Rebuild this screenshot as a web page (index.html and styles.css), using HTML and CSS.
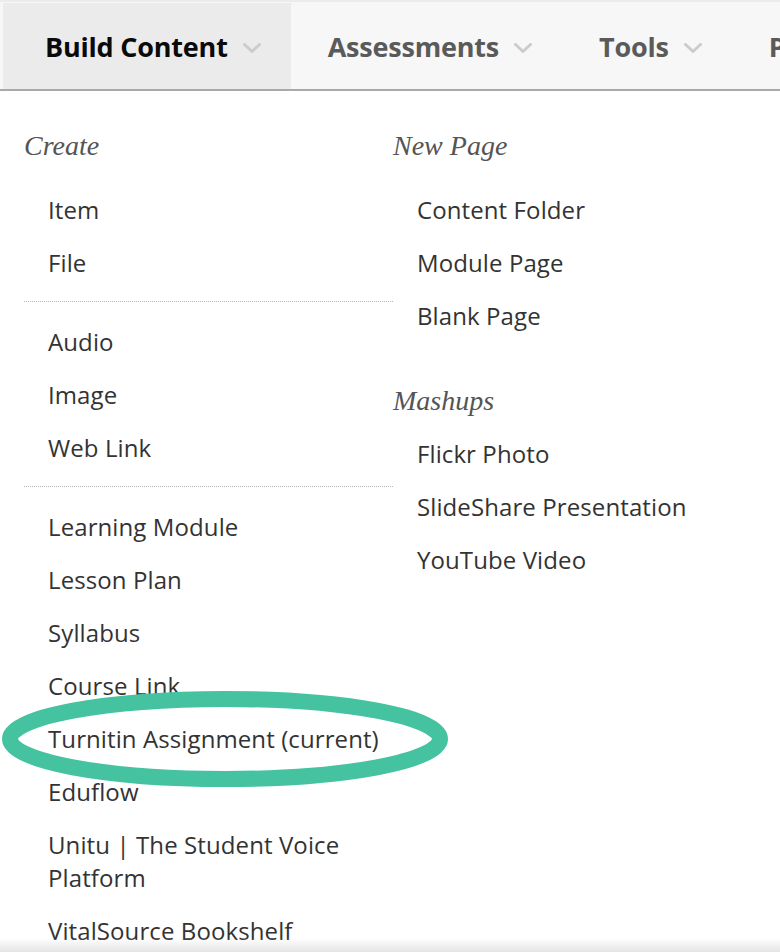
FILE: index.html
```html
<!DOCTYPE html>
<html lang="en">
<head>
<meta charset="utf-8">
<title>Build Content</title>
<link rel="stylesheet" href="styles.css">
</head>
<body>
<nav class="tabs">
  <div class="tab tab-active">Build Content<svg class="chev" viewBox="0 0 18 10" width="18" height="10"><polyline points="1.5,1.5 9,8.5 16.5,1.5"/></svg></div>
  <div class="tab">Assessments<svg class="chev" viewBox="0 0 18 10" width="18" height="10"><polyline points="1.5,1.5 9,8.5 16.5,1.5"/></svg></div>
  <div class="tab">Tools<svg class="chev" viewBox="0 0 18 10" width="18" height="10"><polyline points="1.5,1.5 9,8.5 16.5,1.5"/></svg></div>
  <div class="tab">Partner Content<svg class="chev" viewBox="0 0 18 10" width="18" height="10"><polyline points="1.5,1.5 9,8.5 16.5,1.5"/></svg></div>
</nav>
<main class="menu">
  <section class="col col-left">
    <h3 class="heading">Create</h3>
    <ul class="items">
      <li>Item</li>
      <li>File</li>
    </ul>
    <hr class="sep">
    <ul class="items">
      <li>Audio</li>
      <li>Image</li>
      <li>Web Link</li>
    </ul>
    <hr class="sep">
    <ul class="items">
      <li>Learning Module</li>
      <li>Lesson Plan</li>
      <li>Syllabus</li>
      <li>Course Link</li>
      <li class="marked">Turnitin Assignment (current)<svg class="ring" viewBox="0 0 452 100" width="452" height="100"><ellipse cx="225" cy="50" rx="215" ry="40"/></svg></li>
      <li>Eduflow</li>
      <li>Unitu | The Student Voice Platform</li>
      <li>VitalSource Bookshelf</li>
    </ul>
  </section>
  <section class="col col-right">
    <h3 class="heading">New Page</h3>
    <ul class="items">
      <li>Content Folder</li>
      <li>Module Page</li>
      <li>Blank Page</li>
    </ul>
    <h3 class="heading heading-sub">Mashups</h3>
    <ul class="items">
      <li>Flickr Photo</li>
      <li>SlideShare Presentation</li>
      <li>YouTube Video</li>
    </ul>
  </section>
</main>
<div class="fade"></div>
</body>
</html>
```
FILE: styles.css
```css
html, body {
  margin: 0;
  padding: 0;
  background: #ffffff;
  overflow: hidden;
}
body {
  font-family: "Open Sans", "Liberation Sans", sans-serif;
  color: #333333;
  width: 780px;
  height: 952px;
  position: relative;
}
.tabs {
  display: flex;
  flex-wrap: nowrap;
  background: #f7f7f7;
  border-top: 2px solid #ececec;
  border-bottom: 2px solid #a9a9a9;
  padding: 1px 0 0 3px;
  white-space: nowrap;
  overflow: hidden;
}
.tab {
  flex: none;
  display: flex;
  align-items: center;
  height: 86px;
  padding: 0 30px 0 37px;
  font-size: 27px;
  font-weight: 700;
  letter-spacing: -0.2px;
  color: #5a5a5a;
}
.tab-active {
  background: #ebebeb;
  color: #0a0a0a;
  padding-left: 42px;
}
.chev {
  margin-left: 15px;
  margin-top: 4px;
}
.chev polyline {
  fill: none;
  stroke: #cccccc;
  stroke-width: 3;
  stroke-linecap: round;
  stroke-linejoin: round;
}
.menu {
  display: flex;
  padding: 38px 0 0 24px;
}
.col-left {
  width: 369px;
  flex: none;
}
.col-right {
  flex: 1;
}
.heading {
  margin: 0 0 21px;
  font-family: "Liberation Serif", "Times New Roman", serif;
  font-style: italic;
  font-weight: 400;
  font-size: 28px;
  line-height: 33px;
  color: #555555;
}
.heading-sub {
  margin-top: 42px;
  margin-bottom: 10px;
}
.items {
  list-style: none;
  margin: 0;
  padding: 0;
}
.items li {
  padding: 10px 0 10px 24px;
  font-size: 24px;
  line-height: 33px;
  letter-spacing: 0.1px;
  color: #333333;
}
.sep {
  margin: 12px 0 13px;
  border: 0;
  border-top: 1px dotted #b5b5b5;
  height: 0;
}
.marked {
  position: relative;
}
.ring {
  position: absolute;
  left: -24px;
  top: -23px;
  pointer-events: none;
}
.ring ellipse {
  fill: none;
  stroke: #45c3a0;
  stroke-width: 16;
}
.fade {
  position: absolute;
  left: 0;
  right: 0;
  bottom: 0;
  height: 14px;
  background: linear-gradient(to bottom, rgba(230,230,230,0), rgba(225,225,225,0.9));
}
```
